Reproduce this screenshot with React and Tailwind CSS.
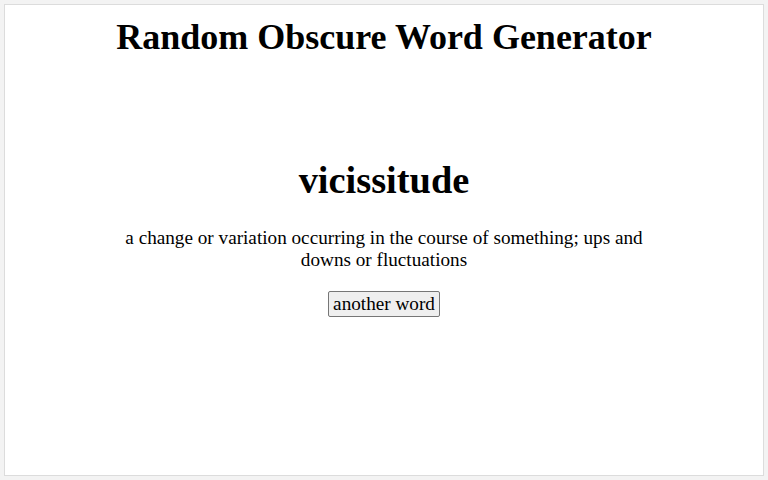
export default function App() {
  return (
    <div className="h-[480px] w-[768px] bg-[#f3f3f3] p-1 font-['Liberation_Serif',serif] text-black">
      <div className="flex h-[472px] flex-col items-center border border-[#dcdcdc] bg-white">
        <h1 className="mt-[11px] text-[36px] font-bold leading-[42px]">Random Obscure Word Generator</h1>
        <h2 className="mt-[100px] text-[38.4px] font-bold leading-[44px]">vicissitude</h2>
        <p className="mt-[25px] w-[540px] text-center text-[19.2px] leading-[22px]">
          a change or variation occurring in the course of something; ups and downs or fluctuations
        </p>
        <button className="mt-[20px] h-[26px] rounded-[2px] border border-[#767676] bg-[#efefef] px-[4px] text-[19.2px] leading-[22px]">
          another word
        </button>
      </div>
    </div>
  );
}
